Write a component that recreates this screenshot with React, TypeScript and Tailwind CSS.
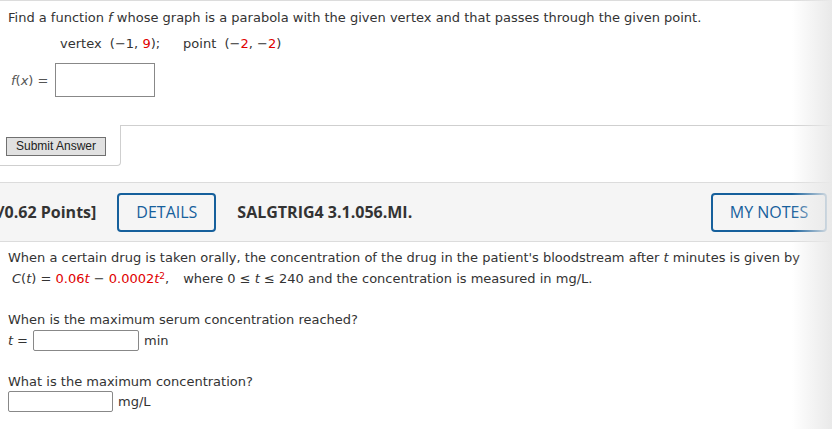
import React from "react";

export default function App() {
  return (
    <div className="relative w-[832px] h-[429px] overflow-hidden bg-white font-['DejaVu_Sans',sans-serif] text-[13px] leading-[21px] text-[#333]">
      <div className="h-px bg-[#dcdcdc]" />
      {/* Question 1 */}
      <div className="pl-2 pt-[6px]">
        <p>
          Find a function <i>f</i> whose graph is a parabola with the given vertex and that passes through the given point.
        </p>
        <p className="mt-[5px] pl-[52px] whitespace-pre">
          vertex  (−1, <span className="text-[#e00000]">9</span>);<span className="inline-block w-[23px]" />point  (−<span className="text-[#e00000]">2</span>, −<span className="text-[#e00000]">2</span>)
        </p>
        <div className="mt-[9px] flex items-center">
          <span className="ml-[3px] italic text-[#555]">f</span>
          <span className="text-[#555]">(</span>
          <span className="italic text-[#555]">x</span>
          <span className="text-[#555]">) =</span>
          <div className="ml-[7px] w-[100px] h-[34px] border border-[#888] bg-white" />
        </div>
      </div>
      {/* Submit area */}
      <div className="mt-[28px] flex">
        <div className="w-[121px] h-[41px] border-r border-b border-[#cfcfcf] rounded-br-[4px] flex items-start pt-[12px] pl-[6px]">
          <button className="h-[19px] w-[100px] border border-[#707070] bg-[#e1e1e1] font-['Liberation_Sans',sans-serif] text-[12px] leading-[17px] text-[#222]">
            Submit Answer
          </button>
        </div>
        <div className="flex-1 border-t border-[#cfcfcf] -ml-px" />
      </div>
      {/* Header band */}
      <div className="mt-[16px] h-[60px] border-y border-[#dcdcdc] bg-[#f5f5f5] flex items-center font-['Open_Sans',sans-serif]">
        <span className="-ml-[2px] text-[16px] font-bold text-[#333]">/0.62 Points]</span>
        <button className="ml-[21px] w-[99px] h-[39px] rounded-[4px] border-2 border-[#16609c] text-[16px] font-medium text-[#16609c]">
          DETAILS
        </button>
        <span className="ml-[21px] text-[16px] font-bold text-[#333]">SALGTRIG4 3.1.056.MI.</span>
        <button className="ml-auto mr-[5px] w-[116px] h-[39px] rounded-[4px] border-2 border-[#16609c] text-[16px] font-medium text-[#16609c]">
          MY NOTES
        </button>
      </div>
      {/* Question 2 */}
      <div className="pl-2 pt-[5px]">
        <p>
          When a certain drug is taken orally, the concentration of the drug in the patient's bloodstream after <i>t</i> minutes is given by
        </p>
        <p className="pl-[4px] whitespace-pre">
          <i>C</i>(<i>t</i>) = <span className="text-[#e00000]">0.06<i>t</i></span> − <span className="text-[#e00000]">0.0002<i>t</i><sup className="text-[9px]">2</sup></span>,<span className="inline-block w-[14px]" />where 0 ≤ <i>t</i> ≤ 240 and the concentration is measured in mg/L.
        </p>
        <p className="mt-[20px]">When is the maximum serum concentration reached?</p>
        <div className="flex items-center h-[21px]">
          <i>t</i>
          <span className="ml-[4px]">=</span>
          <div className="ml-[5px] w-[106px] h-[21px] border border-[#888] rounded-[2px]" />
          <span className="ml-[5px]">min</span>
        </div>
        <p className="mt-[20px]">What is the maximum concentration?</p>
        <div className="flex items-center h-[21px] -mt-[1px]">
          <div className="w-[105px] h-[21px] border border-[#888] rounded-[2px]" />
          <span className="ml-[5px]">mg/L</span>
        </div>
      </div>
      <div className="pointer-events-none absolute right-0 top-0 h-full w-[40px] bg-gradient-to-r from-transparent to-[#e9e9e9]" />
    </div>
  );
}
